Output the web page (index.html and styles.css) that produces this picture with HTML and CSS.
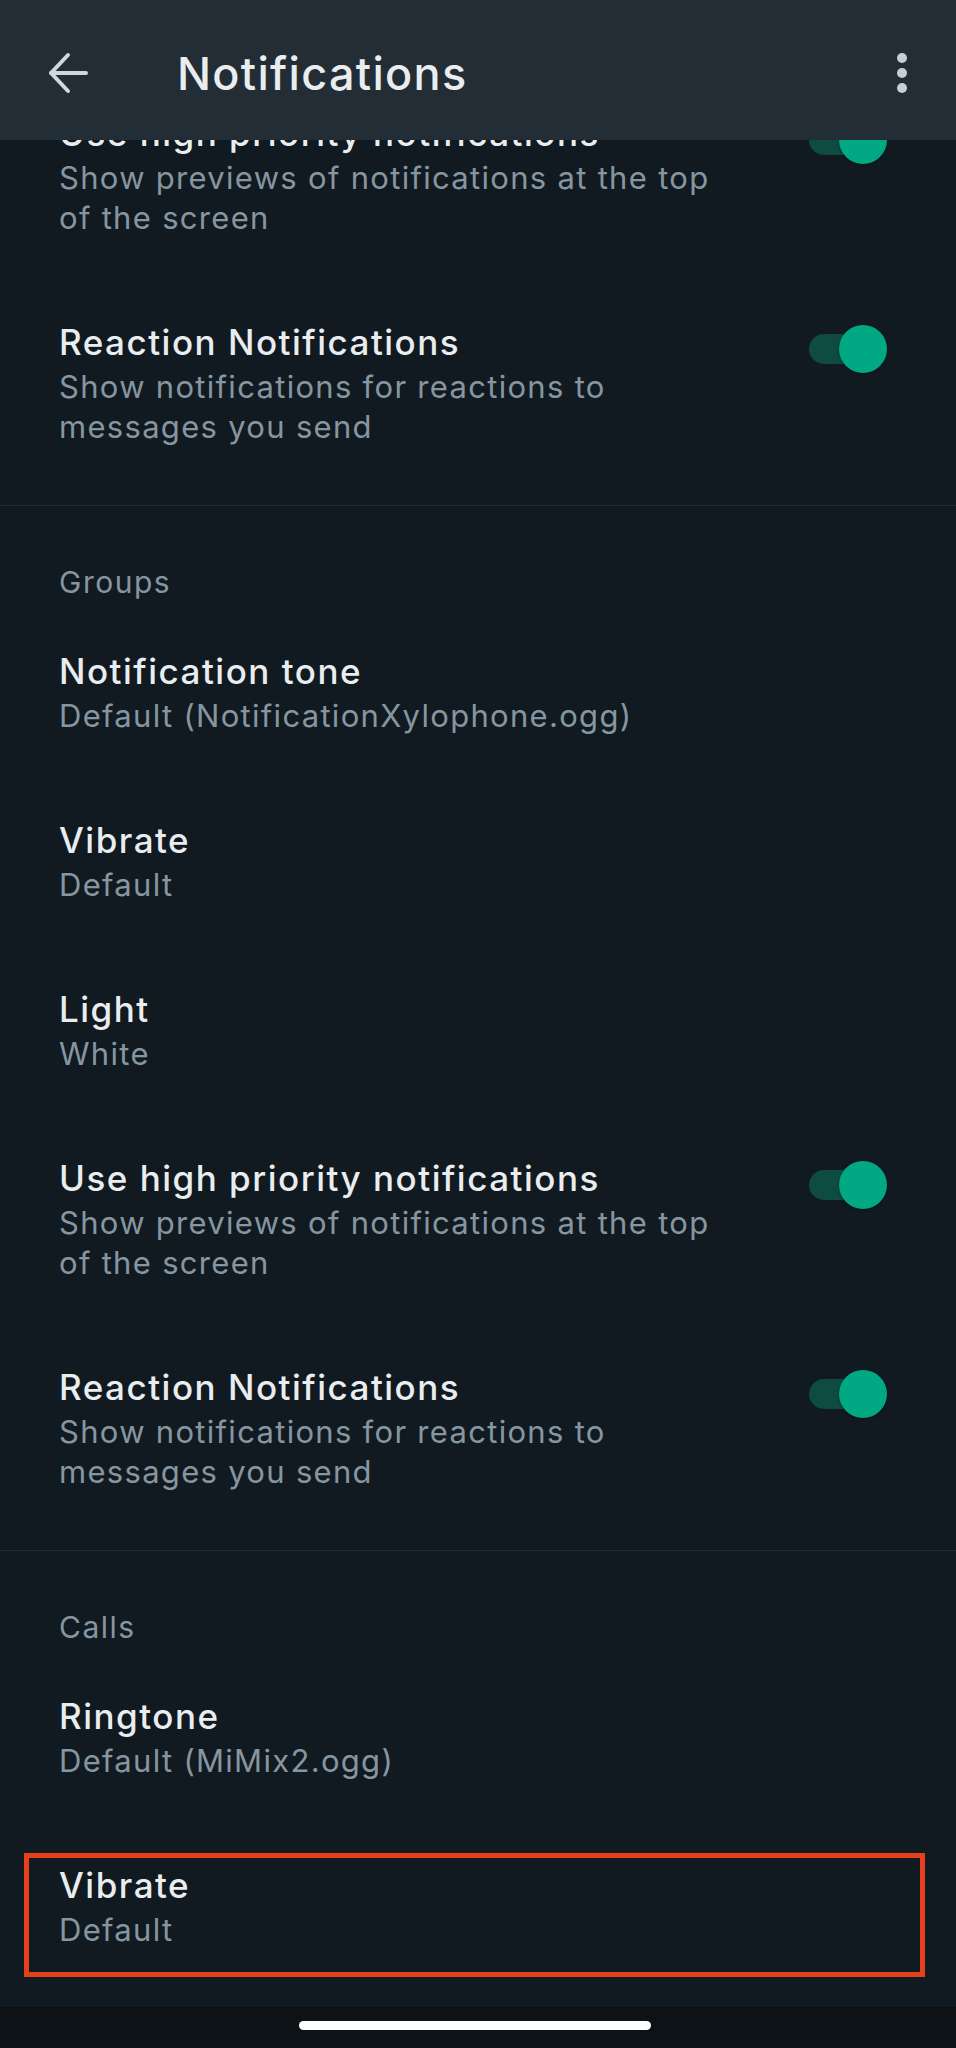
FILE: index.html
```html
<!DOCTYPE html>
<html lang="en">
<head>
<meta charset="utf-8">
<title>Notifications</title>
<link rel="stylesheet" href="styles.css">
</head>
<body>
<div class="screen">
  <header class="appbar">
    <button class="icon-btn back" aria-label="Back">
      <svg width="48" height="48" viewBox="0 0 48 48" fill="none" stroke="#d1d7db" stroke-width="4" stroke-linecap="round" stroke-linejoin="round"><path d="M7 24H42"/><path d="M24 6L7 24L24 42"/></svg>
    </button>
    <h1 class="appbar-title">Notifications</h1>
    <button class="icon-btn more" aria-label="More options">
      <svg width="12" height="44" viewBox="0 0 12 44" fill="#c9ced1"><circle cx="6" cy="7" r="5"/><circle cx="6" cy="22" r="5"/><circle cx="6" cy="37" r="5"/></svg>
    </button>
  </header>

  <main class="content">
    <div class="scroller">
      <section class="group group-first">
        <div class="item">
          <div class="text">
            <div class="title">Use high priority notifications</div>
            <div class="sub">Show previews of notifications at the top of the screen</div>
          </div>
          <span class="switch on"><span class="track"></span><span class="thumb"></span></span>
        </div>
        <div class="item">
          <div class="text">
            <div class="title">Reaction Notifications</div>
            <div class="sub">Show notifications for reactions to messages you send</div>
          </div>
          <span class="switch on"><span class="track"></span><span class="thumb"></span></span>
        </div>
      </section>

      <section class="group">
        <h2 class="group-title">Groups</h2>
        <div class="item">
          <div class="text">
            <div class="title">Notification tone</div>
            <div class="sub">Default (NotificationXylophone.ogg)</div>
          </div>
        </div>
        <div class="item">
          <div class="text">
            <div class="title">Vibrate</div>
            <div class="sub">Default</div>
          </div>
        </div>
        <div class="item">
          <div class="text">
            <div class="title">Light</div>
            <div class="sub">White</div>
          </div>
        </div>
        <div class="item">
          <div class="text">
            <div class="title">Use high priority notifications</div>
            <div class="sub">Show previews of notifications at the top of the screen</div>
          </div>
          <span class="switch on"><span class="track"></span><span class="thumb"></span></span>
        </div>
        <div class="item">
          <div class="text">
            <div class="title">Reaction Notifications</div>
            <div class="sub">Show notifications for reactions to messages you send</div>
          </div>
          <span class="switch on"><span class="track"></span><span class="thumb"></span></span>
        </div>
      </section>

      <section class="group">
        <h2 class="group-title">Calls</h2>
        <div class="item">
          <div class="text">
            <div class="title">Ringtone</div>
            <div class="sub">Default (MiMix2.ogg)</div>
          </div>
        </div>
        <div class="item highlighted">
          <div class="text">
            <div class="title">Vibrate</div>
            <div class="sub">Default</div>
          </div>
          <span class="highlight-box"></span>
        </div>
      </section>
    </div>
  </main>

  <div class="navbar"><span class="pill"></span></div>
</div>
</body>
</html>
```

FILE: styles.css
```css
* { box-sizing: border-box; }

html, body {
  margin: 0;
  padding: 0;
  background: #121a21;
}

body {
  font-family: Inter, "Noto Sans", "Liberation Sans", sans-serif;
  color: #e9edef;
}

.screen {
  width: 956px;
  height: 2048px;
  display: flex;
  flex-direction: column;
  overflow: hidden;
  background: #121a21;
}

/* App bar */
.appbar {
  height: 140px;
  flex: 0 0 140px;
  background: #222d35;
  display: flex;
  align-items: center;
  padding: 6px 0 0 44px;
  position: relative;
  z-index: 2;
}

.icon-btn {
  border: 0;
  background: none;
  padding: 0;
  margin: 0;
  display: flex;
  align-items: center;
  justify-content: center;
}

.appbar-title {
  margin: 0 0 0 85px;
  font-size: 45px;
  font-weight: 500;
  color: #e9edef;
  letter-spacing: 1.3px;
  flex: 1;
  line-height: 1;
}

.more {
  margin-right: 48px;
}

/* Content */
.content {
  flex: 0 0 1867px;
  height: 1867px;
  overflow: hidden;
}

.scroller {
  margin-top: -70px;
}

.group {
  padding-bottom: 17px;
  border-bottom: 1px solid #1f2930;
}

.group:last-child {
  border-bottom: 0;
}

.group-title {
  margin: 0;
  padding: 56px 59px 6px;
  font-size: 30px;
  line-height: 40px;
  font-weight: 400;
  letter-spacing: 1.5px;
  color: #8696a0;
}

.item {
  position: relative;
  display: flex;
  align-items: flex-start;
  padding: 41px 69px 41px 59px;
}

.text {
  width: 674px;
}

.title {
  font-size: 35px;
  line-height: 44px;
  font-weight: 500;
  letter-spacing: 1.5px;
  color: #e9edef;
}

.sub {
  margin-top: 3px;
  font-size: 31px;
  line-height: 40px;
  letter-spacing: 1.3px;
  color: #8696a0;
}

/* Switch */
.switch {
  position: relative;
  margin-left: auto;
  margin-top: 5px;
  width: 78px;
  height: 48px;
  flex: 0 0 78px;
}

.track {
  position: absolute;
  left: 0;
  top: 9px;
  width: 70px;
  height: 30px;
  border-radius: 15px;
  background: #0e4c41;
}

.thumb {
  position: absolute;
  right: 0;
  top: 0;
  width: 48px;
  height: 48px;
  border-radius: 50%;
  background: #00a884;
  box-shadow: 0 1px 3px rgba(0, 0, 0, 0.45);
}

/* Annotation box */
.highlight-box {
  position: absolute;
  top: 31px;
  left: 24px;
  right: 31px;
  height: 124px;
  border: 5px solid #e53f1c;
  pointer-events: none;
}

/* Bottom nav bar */
.navbar {
  flex: 0 0 41px;
  height: 41px;
  background: #0c1216;
  display: flex;
  justify-content: center;
  padding: 14px 6px 0 0;
}

.pill {
  display: block;
  width: 352px;
  height: 9px;
  border-radius: 5px;
  background: #ffffff;
}
```
